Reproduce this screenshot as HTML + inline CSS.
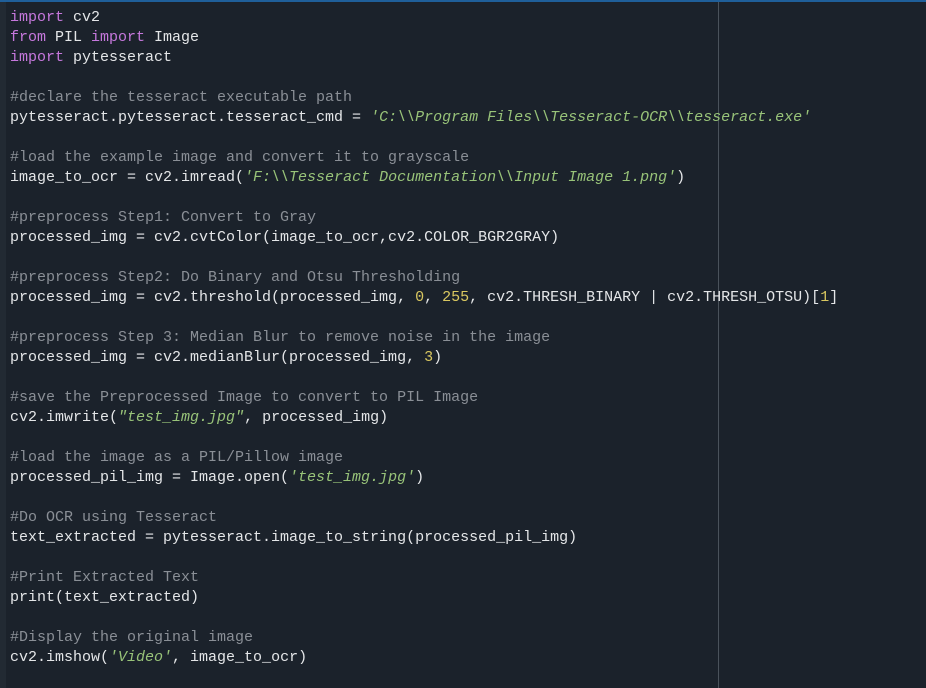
<!DOCTYPE html>
<html><head><style>
body{margin:0;width:926px;height:688px;background:#1b222b;overflow:hidden;position:relative}
.top{position:absolute;left:0;top:0;width:926px;height:2px;background:#1f5f9a}
.gut{position:absolute;left:0;top:2px;width:6px;height:686px;background:#222a33}
.vl{position:absolute;left:718px;top:2px;width:1px;height:686px;background:#4a525b}
pre{position:absolute;left:10px;top:8px;margin:0;font:15px/20px "Liberation Mono",monospace;color:#e4e6e8}
.k{color:#c678dd}.c{color:#8a8f96}.s{color:#98c379;font-style:italic}.n{color:#d9c760}
</style></head><body>
<div class="top"></div><div class="gut"></div><div class="vl"></div>
<pre><span class="k">import</span> cv2
<span class="k">from</span> PIL <span class="k">import</span> Image
<span class="k">import</span> pytesseract

<span class="c">#declare the tesseract executable path</span>
pytesseract.pytesseract.tesseract_cmd = <span class="s">'C:\\Program Files\\Tesseract-OCR\\tesseract.exe'</span>

<span class="c">#load the example image and convert it to grayscale</span>
image_to_ocr = cv2.imread(<span class="s">'F:\\Tesseract Documentation\\Input Image 1.png'</span>)

<span class="c">#preprocess Step1: Convert to Gray</span>
processed_img = cv2.cvtColor(image_to_ocr,cv2.COLOR_BGR2GRAY)

<span class="c">#preprocess Step2: Do Binary and Otsu Thresholding</span>
processed_img = cv2.threshold(processed_img, <span class="n">0</span>, <span class="n">255</span>, cv2.THRESH_BINARY | cv2.THRESH_OTSU)[<span class="n">1</span>]

<span class="c">#preprocess Step 3: Median Blur to remove noise in the image</span>
processed_img = cv2.medianBlur(processed_img, <span class="n">3</span>)

<span class="c">#save the Preprocessed Image to convert to PIL Image</span>
cv2.imwrite(<span class="s">"test_img.jpg"</span>, processed_img)

<span class="c">#load the image as a PIL/Pillow image</span>
processed_pil_img = Image.open(<span class="s">'test_img.jpg'</span>)

<span class="c">#Do OCR using Tesseract</span>
text_extracted = pytesseract.image_to_string(processed_pil_img)

<span class="c">#Print Extracted Text</span>
print(text_extracted)

<span class="c">#Display the original image</span>
cv2.imshow(<span class="s">'Video'</span>, image_to_ocr)</pre>
</body></html>
